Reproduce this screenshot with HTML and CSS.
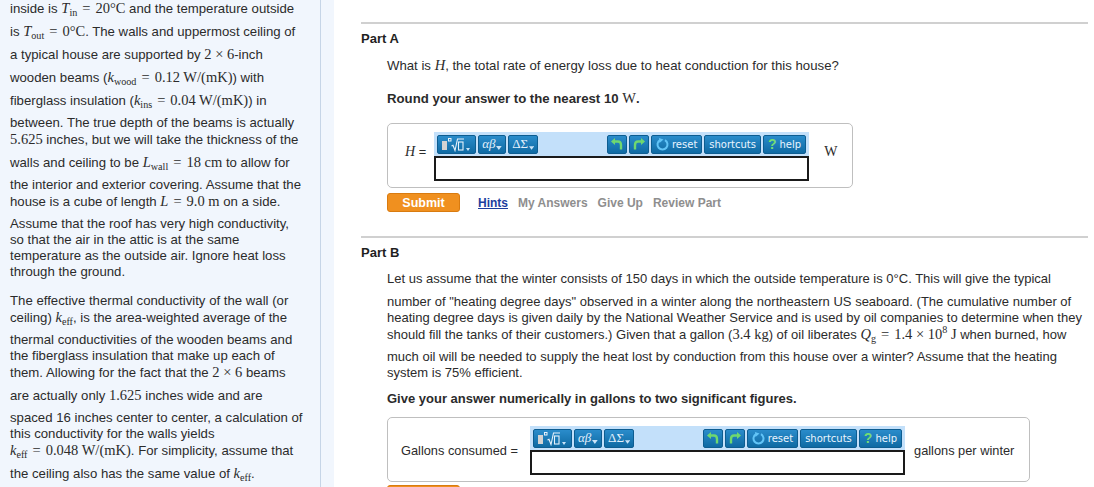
FILE: index.html
```html
<!DOCTYPE html>
<html>
<head>
<meta charset="utf-8">
<link rel="stylesheet" href="styles.css">
</head>
<body>
<aside class="aside">
  <div class="passage">
    <p class="para">inside is <span class="m"><i>T</i><sub>in</sub><span class="eq">=</span>20°C</span> and the temperature outside<br>
    is <span class="m"><i>T</i><sub>out</sub><span class="eq">=</span>0°C</span>. The walls and uppermost ceiling of<br>
    a typical house are supported by <span class="m">2 × 6</span>-inch<br>
    wooden beams (<span class="m"><i>k</i><sub>wood</sub><span class="eq">=</span>0.12 W/(mK)</span>) with<br>
    fiberglass insulation (<span class="m"><i>k</i><sub>ins</sub><span class="eq">=</span>0.04 W/(mK)</span>) in<br>
    between. The true depth of the beams is actually<br>
    <span class="m">5.625</span> inches, but we will take the thickness of the<br>
    walls and ceiling to be <span class="m"><i>L</i><sub>wall</sub><span class="eq">=</span>18 cm</span> to allow for<br>
    the interior and exterior covering. Assume that the<br>
    house is a cube of length <span class="m"><i>L</i><span class="eq">=</span>9.0 m</span> on a side.<br>
    Assume that the roof has very high conductivity,<br>
    so that the air in the attic is at the same<br>
    temperature as the outside air. Ignore heat loss<br>
    through the ground.</p>
    <p class="para gap">The effective thermal conductivity of the wall (or<br>
    ceiling) <span class="m"><i>k</i><sub>eff</sub></span>, is the area-weighted average of the<br>
    thermal conductivities of the wooden beams and<br>
    the fiberglass insulation that make up each of<br>
    them. Allowing for the fact that the <span class="m">2 × 6</span> beams<br>
    are actually only <span class="m">1.625</span> inches wide and are<br>
    spaced 16 inches center to center, a calculation of<br>
    this conductivity for the walls yields<br>
    <span class="m"><i>k</i><sub>eff</sub><span class="eq">=</span>0.048 W/(mK)</span>. For simplicity, assume that<br>
    the ceiling also has the same value of <span class="m"><i>k</i><sub>eff</sub></span>.</p>
  </div>
</aside>

<main class="main">
  <section class="part">
    <h2 class="part-title">Part A</h2>
    <div class="part-body">
      <p class="q">What is <span class="m"><i>H</i></span>, the total rate of energy loss due to heat conduction for this house?</p>
      <p class="q strong">Round your answer to the nearest 10 <span class="m">W</span>.</p>
      <div class="answer">
        <span class="label label-a"><span class="mi">H</span> =</span>
        <div class="editor">
          <div class="toolbar">
            <span class="btn btn-tpl"><svg width="31" height="15" viewBox="0 0 31 15"><rect x="1" y="4" width="5" height="9" fill="#d3d3d3"/><rect x="7.5" y="1.5" width="2.5" height="2.5" fill="none" stroke="#e8f2fb" stroke-width="1"/><path d="M10.5 9 L12 8.3 L14 13.5 L16.5 2 L23 2" fill="none" stroke="#e8f2fb" stroke-width="1.1"/><rect x="17.5" y="5" width="4.5" height="8" fill="none" stroke="#e8f2fb" stroke-width="1.1"/><path d="M25 11 L29 11 L27 14 Z" fill="#c9e3f8"/></svg></span>
            <span class="btn btn-greek"><span class="gk it">αβ</span><svg class="tri" width="6" height="4" viewBox="0 0 6 4"><path d="M0 0 L6 0 L3 4 Z" fill="#c9e3f8"/></svg></span>
            <span class="btn btn-greek"><span class="gk">ΔΣ</span><svg class="tri" width="6" height="4" viewBox="0 0 6 4"><path d="M0 0 L6 0 L3 4 Z" fill="#c9e3f8"/></svg></span>
            <span class="btn btn-icon push"><svg width="14" height="14" viewBox="0 0 14 14"><path d="M4 4.5 L8 4.5 Q11 4.5 11 8 L11 12.5" fill="none" stroke="#6fd86f" stroke-width="2.4"/><path d="M1 4.5 L5 1 L5 8 Z" fill="#6fd86f"/></svg></span>
            <span class="btn btn-icon"><svg width="14" height="14" viewBox="0 0 14 14"><path d="M10 4.5 L6 4.5 Q3 4.5 3 8 L3 12.5" fill="none" stroke="#6fd86f" stroke-width="2.4"/><path d="M13 4.5 L9 1 L9 8 Z" fill="#6fd86f"/></svg></span>
            <span class="btn btn-text"><svg width="13" height="14" viewBox="0 0 13 14"><path d="M4 3.2 A5 5 0 1 0 9 3.2" fill="none" stroke="#62c4f7" stroke-width="2"/><path d="M3 1 L7.5 2.5 L3.5 6 Z" fill="#62c4f7"/></svg>reset</span>
            <span class="btn btn-text">shortcuts</span>
            <span class="btn btn-text"><span class="qm">?</span>help</span>
          </div>
          <div class="input"></div>
        </div>
        <span class="unit unit-w">W</span>
      </div>
      <div class="actions">
        <span class="submit">Submit</span>
        <a class="link hints">Hints</a>
        <a class="link">My Answers</a>
        <a class="link">Give Up</a>
        <a class="link">Review Part</a>
      </div>
    </div>
  </section>

  <section class="part part-b">
    <h2 class="part-title">Part B</h2>
    <div class="part-body">
      <p class="q small">Let us assume that the winter consists of 150 days in which the outside temperature is <span class="m sans">0°C</span>. This will give the typical<br>
      number of "heating degree days" observed in a winter along the northeastern US seaboard. (The cumulative number of<br>
      heating degree days is given daily by the National Weather Service and is used by oil companies to determine when they<br>
      should fill the tanks of their customers.) Given that a gallon (<span class="m">3.4 kg</span>) of oil liberates <span class="m"><i>Q</i><sub>g</sub><span class="eq">=</span>1.4 × 10<sup>8</sup> J</span> when burned, how<br>
      much oil will be needed to supply the heat lost by conduction from this house over a winter? Assume that the heating<br>
      system is 75% efficient.</p>
      <p class="q small strong">Give your answer numerically in gallons to two significant figures.</p>
      <div class="answer answer-b">
        <span class="label">Gallons consumed =</span>
        <div class="editor">
          <div class="toolbar">
            <span class="btn btn-tpl"><svg width="31" height="15" viewBox="0 0 31 15"><rect x="1" y="4" width="5" height="9" fill="#d3d3d3"/><rect x="7.5" y="1.5" width="2.5" height="2.5" fill="none" stroke="#e8f2fb" stroke-width="1"/><path d="M10.5 9 L12 8.3 L14 13.5 L16.5 2 L23 2" fill="none" stroke="#e8f2fb" stroke-width="1.1"/><rect x="17.5" y="5" width="4.5" height="8" fill="none" stroke="#e8f2fb" stroke-width="1.1"/><path d="M25 11 L29 11 L27 14 Z" fill="#c9e3f8"/></svg></span>
            <span class="btn btn-greek"><span class="gk it">αβ</span><svg class="tri" width="6" height="4" viewBox="0 0 6 4"><path d="M0 0 L6 0 L3 4 Z" fill="#c9e3f8"/></svg></span>
            <span class="btn btn-greek"><span class="gk">ΔΣ</span><svg class="tri" width="6" height="4" viewBox="0 0 6 4"><path d="M0 0 L6 0 L3 4 Z" fill="#c9e3f8"/></svg></span>
            <span class="btn btn-icon push"><svg width="14" height="14" viewBox="0 0 14 14"><path d="M4 4.5 L8 4.5 Q11 4.5 11 8 L11 12.5" fill="none" stroke="#6fd86f" stroke-width="2.4"/><path d="M1 4.5 L5 1 L5 8 Z" fill="#6fd86f"/></svg></span>
            <span class="btn btn-icon"><svg width="14" height="14" viewBox="0 0 14 14"><path d="M10 4.5 L6 4.5 Q3 4.5 3 8 L3 12.5" fill="none" stroke="#6fd86f" stroke-width="2.4"/><path d="M13 4.5 L9 1 L9 8 Z" fill="#6fd86f"/></svg></span>
            <span class="btn btn-text"><svg width="13" height="14" viewBox="0 0 13 14"><path d="M4 3.2 A5 5 0 1 0 9 3.2" fill="none" stroke="#62c4f7" stroke-width="2"/><path d="M3 1 L7.5 2.5 L3.5 6 Z" fill="#62c4f7"/></svg>reset</span>
            <span class="btn btn-text">shortcuts</span>
            <span class="btn btn-text"><span class="qm">?</span>help</span>
          </div>
          <div class="input"></div>
        </div>
        <span class="unit">gallons per winter</span>
      </div>
      <div class="actions actions-b">
        <span class="submit"></span>
      </div>
    </div>
  </section>
</main>
</body>
</html>
```

FILE: styles.css
```css
html, body {
  margin: 0;
  padding: 0;
}
body {
  display: flex;
  height: 487px;
  overflow: hidden;
  background: #fff;
  font-family: "Liberation Sans", Arial, sans-serif;
  color: #2b2b2b;
}

/* left passage */
.aside {
  flex: 0 0 auto;
  background: #f1f6fd;
  padding-right: 13px;
}
.passage {
  width: 310px;
  height: 100%;
  padding-left: 10px;
  border-right: 1px solid #c6d5e7;
  font-size: 13.2px;
  line-height: 16px;
  white-space: nowrap;
}
.para {
  margin: 0;
}
.para.gap {
  margin-top: 13px;
}

/* math */
.m {
  display: inline-block;
  padding-bottom: 7px;
  font-family: "Liberation Serif", "Times New Roman", serif;
  font-size: 14.5px;
  line-height: 16px;
  font-weight: normal;
}
.m.sans {
  font-family: "Liberation Sans", Arial, sans-serif;
  font-size: 13px;
}
.m i, .mi {
  font-style: italic;
  font-family: "Liberation Serif", "Times New Roman", serif;
}
.m sub {
  font-size: 70%;
  vertical-align: -3px;
  line-height: 0;
}
.m sup {
  font-size: 70%;
  vertical-align: 6px;
  line-height: 0;
}
.eq {
  margin: 0 5px;
}

/* right column */
.main {
  flex: 1;
  padding: 22px 6px 0 27px;
}
.part {
  border-top: 2px solid #d0d0d0;
}
.part-b {
  margin-top: 24px;
}
.part-title {
  margin: 7px 0 0;
  font-size: 13px;
  line-height: 16px;
  font-weight: bold;
  color: #1f1f1f;
}
.part-body {
  padding-left: 26px;
}
.q {
  margin: 10px 0 0;
  font-size: 13.2px;
  line-height: 16px;
  white-space: nowrap;
}
.q.small {
  font-size: 13px;
}
.strong {
  font-weight: bold;
}

/* answer box */
.answer {
  display: inline-flex;
  align-items: center;
  margin-top: 10px;
  padding: 8px 15px 6px 13px;
  border: 1px solid #bfbfbf;
  border-radius: 5px;
}
.label {
  font-size: 12.8px;
  margin-right: 12px;
  white-space: nowrap;
}
.label-a {
  margin-left: 4px;
  margin-right: 8px;
  margin-bottom: 10px;
}
.label .mi {
  font-size: 14px;
}
.unit {
  font-size: 12.8px;
  margin-left: 9px;
  white-space: nowrap;
}
.unit-w {
  font-family: "Liberation Serif", serif;
  font-size: 14px;
  margin-left: 15px;
  margin-bottom: 10px;
}
.editor {
  width: 375px;
}
.toolbar {
  display: flex;
  align-items: center;
  gap: 2px;
  height: 24px;
  padding: 0 3px;
  background: #c3e0fa;
}
.btn {
  display: inline-flex;
  align-items: center;
  justify-content: center;
  height: 19px;
  box-sizing: border-box;
  border-radius: 2px;
  background: linear-gradient(#2a8ccb, #0f6aa3);
  border: 1px solid #0d5d91;
  color: #eaf5ff;
  font-family: "DejaVu Sans", Verdana, sans-serif;
  font-size: 10px;
  white-space: nowrap;
}
.btn-tpl {
  width: 39px;
}
.btn-greek {
  padding: 0 3px;
  gap: 1px;
}
.btn-greek:nth-child(2) {
  width: 28px;
}
.btn-greek:nth-child(3) {
  width: 30px;
}
.gk {
  font-family: "Liberation Serif", serif;
  font-size: 13px;
  color: #e3f0fc;
}
.gk.it {
  font-style: italic;
}
.tri {
  margin-top: 8px;
}
.btn-icon {
  width: 20px;
}
.push {
  margin-left: auto;
}
.btn-text {
  padding: 0 4px;
  gap: 3px;
}
.qm {
  color: #74dc74;
  font-weight: bold;
  font-size: 14px;
  font-family: "Liberation Sans", Arial, sans-serif;
}
.input {
  height: 25px;
  box-sizing: border-box;
  border: 2px solid #1a1a1a;
  background: #fff;
}

/* actions */
.actions {
  display: flex;
  align-items: center;
  gap: 10px;
  margin-top: 5px;
}
.actions-b {
  margin-top: 3px;
}
.submit {
  display: inline-flex;
  align-items: center;
  justify-content: center;
  width: 73px;
  height: 19px;
  box-sizing: border-box;
  background: #f0901f;
  border: 1px solid #d97b10;
  border-radius: 3px;
  color: #fff;
  font-weight: bold;
  font-size: 12.5px;
  margin-right: 8px;
}
.link {
  font-size: 12px;
  font-weight: bold;
  color: #8e8e8e;
}
.hints {
  color: #1c3e9e;
  text-decoration: underline;
}
```
